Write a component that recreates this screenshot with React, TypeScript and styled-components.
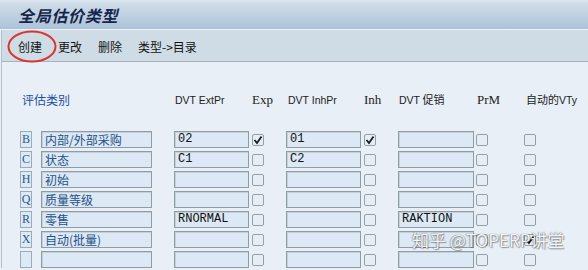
import React from 'react';
import styled, { createGlobalStyle } from 'styled-components';

const Global = createGlobalStyle`
  html, body { margin: 0; padding: 0; background: #e8eff7; }
  body {
    font-family: "Noto Sans CJK SC", "Liberation Sans", sans-serif;
    width: 588px; height: 270px; overflow: hidden;
  }
`;

const COL = { key: 1, desc: 3, ext: 5, exp: 7, inh: 9, inhc: 11, pro: 13, prm: 15, auto: 17 } as const;
type ColName = keyof typeof COL;

const Page = styled.div`
  position: relative;
  width: 588px;
  height: 270px;
  overflow: hidden;
  background: #e8eff7;
`;

const TitleBar = styled.div`
  height: 30px;
  box-sizing: border-box;
  padding-left: 18px;
  display: flex;
  align-items: center;
  background: linear-gradient(#dbe6f0 0, #cfdce8 4px, #bdd0e1 16px, #a9c2d8 30px);
  border-bottom: 1px solid #edf2f7;
`;

const Title = styled.h1`
  margin: 0;
  font-family: "Noto Sans CJK SC", sans-serif;
  font-size: 16px;
  font-weight: 700;
  font-style: italic;
  letter-spacing: 0.7px;
  line-height: 1;
  color: #16254a;
`;

const Body = styled.div`
  border-left: 1px solid #b3c0ca;
  margin-left: 1px;
`;

const Toolbar = styled.div`
  position: relative;
  height: 32px;
  box-sizing: border-box;
  display: flex;
  align-items: center;
  gap: 16px;
  padding-left: 16px;
  background: #cfdce6;
  border-bottom: 1px solid #a5b2bc;
`;

const ToolButton = styled.span`
  font-size: 12px;
  line-height: 1;
  color: #141414;
  padding-top: 2px;
`;

const Circle = styled.svg`
  position: absolute;
  left: 5px;
  top: 0px;
  width: 50px;
  height: 33px;
  pointer-events: none;
`;

const Content = styled.div`
  padding-top: 29px;
  display: flex;
  flex-direction: column;
  gap: 3px;
`;

const Grid = styled.div<{ $head?: boolean }>`
  display: grid;
  padding-left: 18px;
  grid-template-columns: 12px 9px 111px 22px 75px 3px 12px 22px 75px 3px 12px 22px 76px 2px 12px 36px 12px;
  height: 17px;
  align-items: center;
  margin-bottom: ${p => (p.$head ? '20px' : '0')};
`;

const Label = styled.span<{ $col: number; $dx?: number; $serif?: boolean; $blue?: boolean }>`
  grid-column: ${p => p.$col} / span 2;
  grid-row: 1;
  white-space: nowrap;
  padding-left: ${p => p.$dx ?? 1}px;
  font-family: ${p => (p.$serif ? '"Liberation Serif", serif' : '"Noto Sans CJK SC", "Liberation Sans", sans-serif')};
  font-size: ${p => (p.$serif ? '13px' : p.$blue ? '12px' : '11px')};
  color: ${p => (p.$blue ? '#2250a0' : '#222')};
  line-height: 16px;
`;

const Small = styled.span`
  font-family: "Liberation Sans", sans-serif;
  font-size: 10.5px;
`;

const KeyBox = styled.div`
  grid-column: 1;
  grid-row: 1;
  height: 17px;
  box-sizing: border-box;
  border: 1px solid #9aabb9;
  background: #dde9f4;
  font-family: "Liberation Serif", serif;
  font-size: 12px;
  line-height: 15px;
  text-align: center;
  color: #2a5a90;
`;

const Field = styled.div<{ $col: number; $code?: boolean }>`
  grid-column: ${p => p.$col};
  grid-row: 1;
  height: 17px;
  box-sizing: border-box;
  border: 1px solid #8f9ba5;
  box-shadow: inset 1px 1px 0 #c4d0da;
  background: #dce8f3;
  padding-left: 3px;
  font-family: ${p => (p.$code ? '"Liberation Mono", monospace' : '"Noto Sans CJK SC", sans-serif')};
  font-size: 12px;
  line-height: 15px;
  color: ${p => (p.$code ? '#111' : '#24528a')};
  white-space: nowrap;
  overflow: hidden;
`;

const Check = styled.div<{ $col: number }>`
  grid-column: ${p => p.$col};
  grid-row: 1;
  width: 12px;
  height: 12px;
  box-sizing: border-box;
  border: 1px solid #959fa8;
  border-radius: 2px;
  background: #e6edf5;
  display: flex;
  align-items: center;
  justify-content: center;
`;

const Watermark = styled.div`
  position: absolute;
  left: 412px;
  top: 230px;
  font-family: "Noto Sans CJK SC", sans-serif;
  font-size: 17px;
  line-height: 20px;
  color: #f2f3f5;
  white-space: nowrap;
  text-shadow: 0 0 1px #777, 1px 1px 1px rgba(0, 0, 0, 0.35), -1px 0 1px rgba(0,0,0,0.2);
  pointer-events: none;
`;

type Row = {
  key: string; desc: string; ext: string; exp: boolean; inh: string; inhc: boolean;
  pro: string; prm: boolean; auto: boolean;
};

const rows: Row[] = [
  { key: 'B', desc: '内部/外部采购', ext: '02', exp: true, inh: '01', inhc: true, pro: '', prm: false, auto: false },
  { key: 'C', desc: '状态', ext: 'C1', exp: false, inh: 'C2', inhc: false, pro: '', prm: false, auto: false },
  { key: 'H', desc: '初始', ext: '', exp: false, inh: '', inhc: false, pro: '', prm: false, auto: false },
  { key: 'Q', desc: '质量等级', ext: '', exp: false, inh: '', inhc: false, pro: '', prm: false, auto: false },
  { key: 'R', desc: '零售', ext: 'RNORMAL', exp: false, inh: '', inhc: false, pro: 'RAKTION', prm: false, auto: false },
  { key: 'X', desc: '自动(批量)', ext: '', exp: false, inh: '', inhc: false, pro: '', prm: false, auto: true },
  { key: '', desc: '', ext: '', exp: false, inh: '', inhc: false, pro: '', prm: false, auto: false },
];

const Tick = () => (
  <svg width="10" height="10" viewBox="0 0 10 10">
    <polyline points="1.5,5 4,8 8.5,1.5" fill="none" stroke="#1c1c1c" strokeWidth="1.8" />
  </svg>
);

const Box = ({ col, on }: { col: ColName; on: boolean }) => (
  <Check $col={COL[col]}>{on && <Tick />}</Check>
);

export default function App() {
  return (
    <Page>
      <Global />
      <TitleBar>
        <Title>全局估价类型</Title>
      </TitleBar>
      <Body>
        <Toolbar>
          <ToolButton>创建</ToolButton>
          <ToolButton>更改</ToolButton>
          <ToolButton>删除</ToolButton>
          <ToolButton>类型-&gt;目录</ToolButton>
          <Circle viewBox="0 0 50 33">
            <ellipse cx="25" cy="16.5" rx="23.5" ry="15" fill="none" stroke="#d8362e" strokeWidth="2" />
          </Circle>
        </Toolbar>
        <Content>
          <Grid $head>
            <Label $col={COL.key} $dx={2} $blue>评估类别</Label>
            <Label $col={COL.ext} $dx={1}><Small>DVT ExtPr</Small></Label>
            <Label $col={COL.exp} $dx={0} $serif>Exp</Label>
            <Label $col={COL.inh} $dx={2}><Small>DVT InhPr</Small></Label>
            <Label $col={COL.inhc} $dx={0} $serif>Inh</Label>
            <Label $col={COL.pro} $dx={1}><Small>DVT</Small> 促销</Label>
            <Label $col={COL.prm} $dx={1} $serif>PrM</Label>
            <Label $col={COL.auto} $dx={2}>自动的<Small>VTy</Small></Label>
          </Grid>
          {rows.map((r, i) => (
            <Grid key={i}>
              <KeyBox>{r.key}</KeyBox>
              <Field $col={COL.desc}>{r.desc}</Field>
              <Field $col={COL.ext} $code>{r.ext}</Field>
              <Box col="exp" on={r.exp} />
              <Field $col={COL.inh} $code>{r.inh}</Field>
              <Box col="inhc" on={r.inhc} />
              <Field $col={COL.pro} $code>{r.pro}</Field>
              <Box col="prm" on={r.prm} />
              <Box col="auto" on={r.auto} />
            </Grid>
          ))}
        </Content>
      </Body>
      <Watermark>知乎 @TOPERP讲堂</Watermark>
    </Page>
  );
}
